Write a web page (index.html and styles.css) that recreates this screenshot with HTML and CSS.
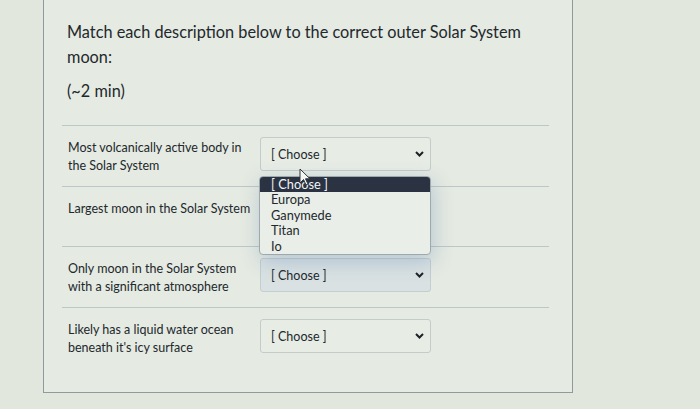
FILE: index.html
```html
<!DOCTYPE html>
<html lang="en">
<head>
<meta charset="utf-8">
<title>Matching question</title>
<link rel="stylesheet" href="styles.css">
</head>
<body>
<div class="card">
  <div class="prompt">
    <p class="prompt-text">Match each description below to the correct outer Solar System moon:</p>
    <p class="prompt-text">(~2 min)</p>
  </div>
  <div class="rows">
    <div class="row">
      <div class="label">Most volcanically active body in the Solar System</div>
      <div class="select-wrap">
        <div class="select">
          <span class="select-value">[ Choose ]</span>
          <svg class="chevron" width="9" height="6" viewBox="0 0 9 6"><path d="M1 1l3.5 3.5L8 1" fill="none" stroke="#1d2226" stroke-width="2"/></svg>
        </div>
        <ul class="dropdown">
          <li class="option option-active">[ Choose ]</li>
          <li class="option">Europa</li>
          <li class="option">Ganymede</li>
          <li class="option">Titan</li>
          <li class="option">Io</li>
        </ul>
        <svg class="cursor" width="12" height="18" viewBox="0 0 12 18"><path d="M1 1v14l3.5-3.5 2.5 5.5 2-1-2.5-5.2H11z" fill="#f4f6f4" stroke="#30363a" stroke-width="1"/></svg>
      </div>
    </div>
    <div class="row">
      <div class="label">Largest moon in the Solar System</div>
      <div class="select-wrap">
        <div class="select select-covered">
          <span class="select-value">[ Choose ]</span>
          <svg class="chevron" width="9" height="6" viewBox="0 0 9 6"><path d="M1 1l3.5 3.5L8 1" fill="none" stroke="#1d2226" stroke-width="2"/></svg>
        </div>
      </div>
    </div>
    <div class="row">
      <div class="label">Only moon in the Solar System with a significant atmosphere</div>
      <div class="select-wrap">
        <div class="select select-tinted">
          <span class="select-value">[ Choose ]</span>
          <svg class="chevron" width="9" height="6" viewBox="0 0 9 6"><path d="M1 1l3.5 3.5L8 1" fill="none" stroke="#1d2226" stroke-width="2"/></svg>
        </div>
      </div>
    </div>
    <div class="row">
      <div class="label">Likely has a liquid water ocean beneath it's icy surface</div>
      <div class="select-wrap">
        <div class="select">
          <span class="select-value">[ Choose ]</span>
          <svg class="chevron" width="9" height="6" viewBox="0 0 9 6"><path d="M1 1l3.5 3.5L8 1" fill="none" stroke="#1d2226" stroke-width="2"/></svg>
        </div>
      </div>
    </div>
  </div>
</div>
</body>
</html>
```

FILE: styles.css
```css
html, body {
  margin: 0;
  padding: 0;
}
body {
  background: #e2e7de;
  font-family: Lato, "Noto Sans", sans-serif;
  color: #22282c;
  height: 409px;
  overflow: hidden;
}
.card {
  margin-left: 43px;
  width: 528px;
  border-left: 1px solid #8e9a9c;
  border-right: 1px solid #8e9a9c;
  border-bottom: 1px solid #8e9a9c;
  background: #e5eae2;
  padding-bottom: 24px;
}
.prompt {
  padding: 19px 22px 0 23px;
}
.prompt-text {
  margin: 0 0 9px 0;
  font-size: 16.3px;
  line-height: 25px;
  width: 470px;
}
.prompt-text:last-child {
  margin-bottom: 22px;
}
.rows {
  margin: 0 23px 0 18px;
}
.row {
  display: flex;
  align-items: flex-start;
  border-top: 1px solid #bcc7c8;
  padding: 11px 0 12px 0;
}
.label {
  width: 192px;
  padding: 2px 0 0 6px;
  font-size: 12.5px;
  line-height: 17.5px;
  min-height: 34px;
}
.select-wrap {
  position: relative;
}
.select {
  box-sizing: border-box;
  width: 171px;
  height: 34px;
  border: 1px solid #c3cbcb;
  border-radius: 3px;
  background: #e7ece5;
  display: flex;
  align-items: center;
  justify-content: space-between;
  padding: 0 6px 0 10px;
  font-size: 12.5px;
}
.select-covered .select-value {
  visibility: hidden;
}
.select-tinted {
  background: #d9e1e2;
  border-color: #c3cdd2;
}
.chevron {
  display: block;
}
.dropdown {
  position: absolute;
  left: -1px;
  top: 39px;
  width: 172px;
  margin: 0;
  padding: 0;
  list-style: none;
  box-sizing: border-box;
  background: #eaeee8;
  border: 1px solid #9ea9ac;
  border-radius: 4px;
  box-shadow: 2px 6px 20px rgba(80, 120, 170, 0.32);
  overflow: hidden;
  z-index: 2;
}
.option {
  font-size: 12.8px;
  line-height: 15.4px;
  padding: 0 11px;
  color: #22282c;
}
.option-active {
  background: #2b3343;
  color: #f2f4f6;
}
.cursor {
  position: absolute;
  left: 39px;
  top: 31px;
  z-index: 3;
}
```
